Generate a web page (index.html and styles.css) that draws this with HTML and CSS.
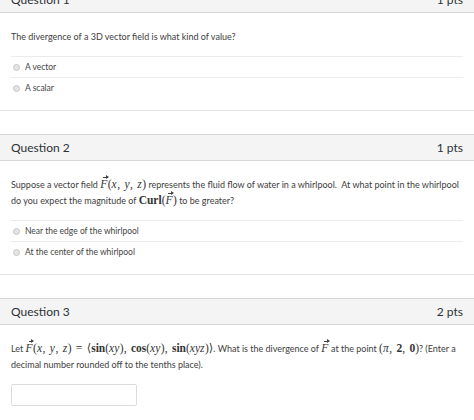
FILE: index.html
```html
<!DOCTYPE html>
<html>
<head>
<meta charset="utf-8">
<link rel="stylesheet" href="styles.css">
</head>
<body>
<div class="quiz">
  <section class="question q-first">
    <div class="q-header"><span class="q-name">Question 1</span><span class="q-pts">1 pts</span></div>
    <div class="q-body">
      <p class="q-text">The divergence of a 3D vector field is what kind of value?</p>
      <div class="answers">
        <label class="answer"><span class="radio"></span><span>A vector</span></label>
        <label class="answer"><span class="radio"></span><span>A scalar</span></label>
      </div>
    </div>
  </section>

  <section class="question">
    <div class="q-header"><span class="q-name">Question 2</span><span class="q-pts">1 pts</span></div>
    <div class="q-body">
      <p class="q-text">Suppose a vector field <span class="m"><i class="vec">F</i>(<i>x</i>, <i>y</i>, <i>z</i>)</span> represents the fluid flow of water in a whirlpool.&nbsp; At what point in the whirlpool do you expect the magnitude of <span class="m"><b>Curl</b>(<i class="vec">F</i>)</span> to be greater?</p>
      <div class="answers">
        <label class="answer"><span class="radio"></span><span>Near the edge of the whirlpool</span></label>
        <label class="answer"><span class="radio"></span><span>At the center of the whirlpool</span></label>
      </div>
    </div>
  </section>

  <section class="question">
    <div class="q-header"><span class="q-name">Question 3</span><span class="q-pts">2 pts</span></div>
    <div class="q-body">
      <p class="q-text">Let <span class="m"><i class="vec">F</i>(<i>x</i>, <i>y</i>, <i>z</i>) = ⟨<b>sin</b>(<i>xy</i>), <b>cos</b>(<i>xy</i>), <b>sin</b>(<i>xyz</i>)⟩</span>. What is the divergence of <span class="m"><i class="vec">F</i></span> at the point <span class="m">(<i>π</i>, <b>2</b>, <b>0</b>)</span>? (Enter a decimal number rounded off to the tenths place).</p>
      <div class="input-box"></div>
    </div>
  </section>
</div>
</body>
</html>
```

FILE: styles.css
```css
html, body {
  margin: 0;
  padding: 0;
  background: #ffffff;
}

body {
  font-family: Lato, "Open Sans", "Liberation Sans", sans-serif;
  color: #3d3d3d;
  overflow: hidden;
}

.quiz {
  margin-top: -14px;
}

.question {
  border-bottom: 1px solid #e2e2e2;
  margin-bottom: 23px;
}

.q-header {
  height: 25px;
  border-top: 1px solid #d6d6d6;
  border-bottom: 1px solid #d6d6d6;
  background: #f4f4f4;
  padding: 0 11px;
  display: flex;
  justify-content: space-between;
  align-items: center;
  font-size: 12px;
  color: #2d3236;
}

.q-body {
  padding: 16px 11px 12px;
}

.q-text {
  margin: 0 0 11px;
  font-size: 9px;
  line-height: 16px;
}

.m {
  font-family: "Liberation Serif", "DejaVu Serif", serif;
  font-size: 11.5px;
  line-height: 0;
  word-spacing: 1.5px;
  color: #333;
  white-space: nowrap;
}

.m i {
  padding-right: 0.5px;
}

.m b {
  font-weight: bold;
}

.vec {
  position: relative;
}

.vec::before {
  content: "";
  position: absolute;
  left: 3px;
  right: 0;
  top: -1px;
  height: 1px;
  background: #444;
}

.vec::after {
  content: "";
  position: absolute;
  right: -1px;
  top: -3px;
  border-left: 3px solid #444;
  border-top: 2px solid transparent;
  border-bottom: 2px solid transparent;
}

.answers {
  display: flex;
  flex-direction: column;
}

.answer {
  display: flex;
  align-items: center;
  gap: 5px;
  height: 20px;
  border-top: 1px solid #ececec;
  padding-left: 2px;
  font-size: 8.5px;
  color: #444;
}

.radio {
  width: 5px;
  height: 5px;
  border-radius: 50%;
  border: 1px solid #c8c8c8;
  background: #e4e4e4;
}

.input-box {
  width: 124px;
  height: 20px;
  border: 1px solid #dcdcdc;
  border-radius: 2px;
  margin-top: 10px;
  margin-bottom: 12px;
}
```
